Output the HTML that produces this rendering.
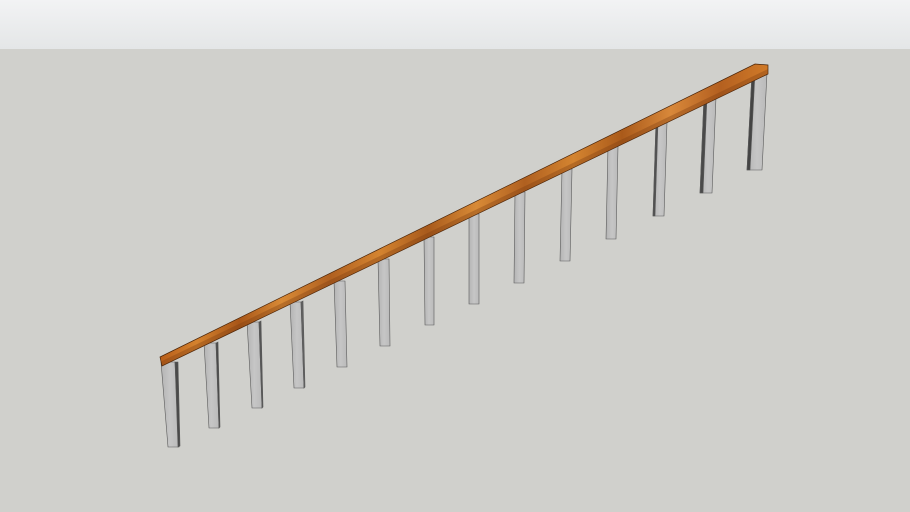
<!DOCTYPE html>
<html><head><meta charset="utf-8"><style>
html,body{margin:0;padding:0;width:910px;height:512px;overflow:hidden;background:#d0d0cc}
</style></head><body>
<svg width="910" height="512" viewBox="0 0 910 512" xmlns="http://www.w3.org/2000/svg">
<defs>
<linearGradient id="sky" x1="0" y1="0" x2="0" y2="1"><stop offset="0" stop-color="#f2f3f4"/><stop offset="1" stop-color="#e4e6e7"/></linearGradient>
<linearGradient id="post" x1="0" y1="0" x2="1" y2="0"><stop offset="0" stop-color="#b4b4b4"/><stop offset="0.5" stop-color="#c6c6c6"/><stop offset="1" stop-color="#bababa"/></linearGradient>
<linearGradient id="rail" x1="160" y1="0" x2="768" y2="0" gradientUnits="userSpaceOnUse">
<stop offset="0" stop-color="#b85e1a"/><stop offset="0.06" stop-color="#d4822e"/><stop offset="0.13" stop-color="#a85618"/><stop offset="0.2" stop-color="#d88a36"/><stop offset="0.28" stop-color="#b06020"/><stop offset="0.36" stop-color="#d48430"/><stop offset="0.44" stop-color="#a85a1c"/><stop offset="0.52" stop-color="#d88a36"/><stop offset="0.6" stop-color="#b06020"/><stop offset="0.68" stop-color="#d48430"/><stop offset="0.76" stop-color="#aa5a1a"/><stop offset="0.84" stop-color="#d8883a"/><stop offset="0.92" stop-color="#b46020"/><stop offset="1" stop-color="#d07a28"/></linearGradient>
</defs>
<rect x="0" y="0" width="910" height="49" fill="url(#sky)"/>
<rect x="0" y="49" width="910" height="463" fill="#d0d0cc"/>
<g stroke="#5a5a5a" stroke-width="0.6">
<polygon points="161,362 175,362 179,447 168,447" fill="url(#post)"/><polygon points="175,362 178,362 180,446 178,447" fill="#4a4a4a"/>
<polygon points="204,343 216,343 219,428 209,428" fill="url(#post)"/><polygon points="216,343 218,342 220,427 219,428" fill="#4a4a4a"/>
<polygon points="247,322 259,322 262,408 252,408" fill="url(#post)"/><polygon points="259,322 261,321 263,407 262,408" fill="#555"/>
<polygon points="290,302 301,302 304,388 294,388" fill="url(#post)"/><polygon points="301,302 303,301 305,387 304,388" fill="#606060"/>
<polygon points="334,281 345,281 347,367 337,367" fill="url(#post)"/>
<polygon points="378,259 389,259 390,346 380,346" fill="url(#post)"/>
<polygon points="424,237 434,237 434,325 425,325" fill="url(#post)"/>
<polygon points="469,214 479,214 479,304 469,304" fill="url(#post)"/>
<polygon points="515,192 525,192 524,283 514,283" fill="url(#post)"/>
<polygon points="562,169 572,169 570,261 560,261" fill="url(#post)"/>
<polygon points="608,146 618,146 616,239 606,239" fill="url(#post)"/>
<polygon points="656,122 667,122 664,216 653,216" fill="url(#post)"/><polygon points="656,122 658,122 655,216 653,216" fill="#505050"/>
<polygon points="704,97 716,97 712,193 700,193" fill="url(#post)"/><polygon points="704,97 707,97 703,193 700,193" fill="#4a4a4a"/>
<polygon points="752,73 767,73 762,170 747,170" fill="url(#post)"/><polygon points="752,73 755,73 750,170 747,170" fill="#444"/>
</g>
<polygon points="160,357 755,64 768,65 768,74 162,366" fill="url(#rail)" stroke="#4a2408" stroke-width="0.7"/>
<polygon points="162,361 768,69 768,74 162,366" fill="#7a3c10" opacity="0.35"/>
</svg>
</body></html>
